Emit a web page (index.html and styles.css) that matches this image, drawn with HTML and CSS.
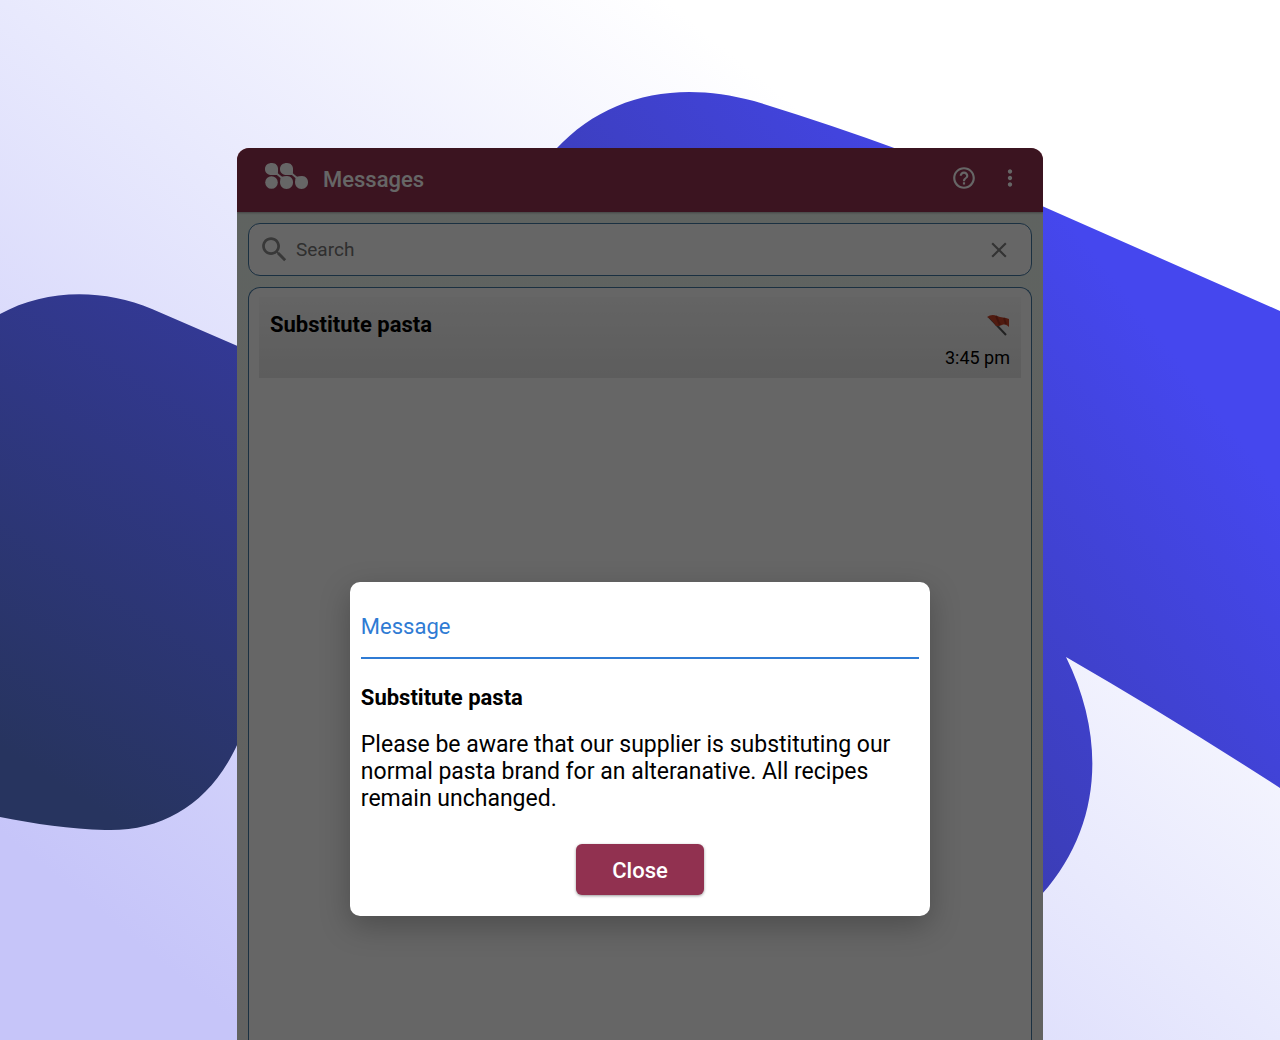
FILE: index.html
```html
<!DOCTYPE html>
<html lang="en">
<head>
    <meta charset="UTF-8">
    <meta name="viewport" content="width=device-width, initial-scale=1.0">
    <title>Messages</title>
    <link rel="stylesheet" href="styles.css">
</head>
<body>
    <svg class="backdrop" viewBox="0 0 1280 1040" preserveAspectRatio="none" aria-hidden="true">
        <defs>
            <linearGradient id="navy" gradientUnits="userSpaceOnUse" x1="20" y1="760" x2="290" y2="330">
                <stop offset="0" stop-color="#27345f"/>
                <stop offset="1" stop-color="#343999"/>
            </linearGradient>
            <linearGradient id="blue" gradientUnits="userSpaceOnUse" x1="800" y1="720" x2="1210" y2="400">
                <stop offset="0" stop-color="#393bab"/>
                <stop offset="1" stop-color="#4547ee"/>
            </linearGradient>
        </defs>
        <path fill="url(#navy)" d="M0 314 C45 289 102 288 152 309 L300 373 L300 560 C268 640 251 715 238 743 C211 803 163 832 105 830 C70 829 35 824 0 817Z"/>
        <path fill="url(#blue)" d="M556 149 C606 95 677 80 754 101 Q832 125 897 149 L1042 206 L1280 311 L1280 788 Q1175 720 1066 657 C1107 740 1101 828 1042 894 L900 900 L540 500Z"/>
    </svg>

    <div class="app">
        <header class="toolbar">
            <svg class="logo" viewBox="0 0 44 28" aria-hidden="true">
                <path d="M0 7C0 3 3 1 7 1c4 0 6 3 6 6v3q0 2-1 3-2 0-5 0C3 13 0 11 0 7z"/>
                <path d="M15 7c0-4 3-6 7-6 4 0 6 3 6 6v3q0 2-1 3-2 0-5 0c-4 0-7-2-7-6z"/>
                <circle cx="6.500" cy="20.500" r="6.300"/>
                <path d="M15 20q0-3 1-5 3-1 6-1c4 0 6 3 6 6.500S25.500 27 21.500 27 15 24 15 20z"/>
                <path d="M30 20q0-3 1-5 3-1 6-1c4 0 6 3 6 6.500S40.500 27 36.500 27 30 24 30 20z"/>
                <path class="logo-link" d="M11 11l6 5M26 11l6 5"/>
            </svg>
            <h1 class="title">Messages</h1>
            <button class="icon-button" type="button" aria-label="Help">
                <svg viewBox="0 0 24 24"><path d="M11 18h2v-2h-2v2zm1-16C6.480 2 2 6.480 2 12s4.480 10 10 10 10-4.480 10-10S17.520 2 12 2zm0 18c-4.410 0-8-3.590-8-8s3.590-8 8-8 8 3.590 8 8-3.590 8-8 8zm0-14c-2.210 0-4 1.790-4 4h2c0-1.100.9-2 2-2s2 .9 2 2c0 2-3 1.750-3 5h2c0-2.250 3-2.500 3-5 0-2.210-1.790-4-4-4z"/></svg>
            </button>
            <button class="icon-button" type="button" aria-label="More">
                <svg viewBox="0 0 24 24"><path d="M12 8c1.100 0 2-.9 2-2s-.9-2-2-2-2 .9-2 2 .9 2 2 2zm0 2c-1.100 0-2 .9-2 2s.9 2 2 2 2-.9 2-2-.9-2-2-2zm0 6c-1.100 0-2 .9-2 2s.9 2 2 2 2-.9 2-2-.9-2-2-2z"/></svg>
            </button>
        </header>

        <main class="content">
            <div class="search-bar">
                <svg class="search-icon" viewBox="0 0 24 24" aria-hidden="true"><path d="M15.500 14h-.79l-.28-.27C15.410 12.590 16 11.110 16 9.500 16 5.910 13.090 3 9.500 3S3 5.910 3 9.500 5.910 16 9.500 16c1.610 0 3.090-.59 4.230-1.570l.27.28v.79l5 4.990L20.490 19l-4.990-5zm-6 0C7.010 14 5 11.990 5 9.500S7.010 5 9.500 5 14 7.010 14 9.500 11.990 14 9.500 14z"/></svg>
                <input class="search-input" type="text" placeholder="Search" aria-label="Search">
                <button class="clear-button" type="button" aria-label="Clear search">
                    <svg viewBox="0 0 24 24"><path d="M19 6.410L17.590 5 12 10.590 6.410 5 5 6.410 10.590 12 5 17.590 6.410 19 12 13.410 17.590 19 19 17.590 13.410 12z"/></svg>
                </button>
            </div>

            <div class="message-list">
                <article class="message-item">
                    <div class="message-row">
                        <h2 class="message-subject">Substitute pasta</h2>
                        <svg class="flag" viewBox="0 0 24 24" aria-hidden="true">
                            <path class="flag-pole" d="M3 4L20 22"/>
                            <path class="flag-cloth" d="M1 4C4 2 7 1 11 3c4 2 8 1 12 3l0 8c-2-2-4-3-7-2-2 1-4 1-6 1C8 10 5 6 1 4z"/>
                            <path class="flag-fold" d="M10 3l4 9M18 5l2 6"/>
                        </svg>
                    </div>
                    <time class="message-time">3:45 pm</time>
                </article>
            </div>
        </main>

        <div class="overlay">
            <div class="dialog" role="dialog" aria-modal="true" aria-labelledby="dialog-title">
                <h2 class="dialog-title" id="dialog-title">Message</h2>
                <h3 class="dialog-subject">Substitute pasta</h3>
                <p class="dialog-text">Please be aware that our supplier is substituting our normal pasta brand for an alteranative. All recipes remain unchanged.</p>
                <button class="close-button" type="button">Close</button>
            </div>
        </div>
    </div>
</body>
</html>
```
FILE: styles.css
```css
:root {
    --color-primary: #953250;
    --color-blue: #2f7bd4;
    --color-border: #4378a3;
    --gap: 11px;
}

* {
    box-sizing: border-box;
}

body {
    margin: 0;
    height: 100vh;
    padding: 148px 16px 0;
    display: flex;
    justify-content: center;
    overflow: hidden;
    font-family: Roboto, Arial, sans-serif;
    color: #000;
    background: linear-gradient(to top right, #c6c5f9 10%, #e8e9fd 50%, #fff 76%);
}

h1, h2, h3, p {
    margin: 0;
}

button {
    border: 0;
    padding: 0;
    background: none;
    font-family: inherit;
    cursor: pointer;
}

.backdrop {
    position: absolute;
    top: 0;
    left: 0;
    width: 100%;
    height: 100%;
    z-index: -1;
}

.app {
    position: relative;
    width: 100%;
    max-width: 806px;
    display: flex;
    flex-direction: column;
    border-radius: 12px 12px 0 0;
    overflow: hidden;
    background: linear-gradient(#edf7f1, #f4f5f2);
}

.toolbar {
    display: flex;
    align-items: center;
    height: 64px;
    padding: 0 20px 4px 28px;
    color: #fff;
    background-color: var(--color-primary);
    box-shadow: 0 1px 2px rgba(0, 0, 0, 0.3);
}

.logo {
    width: 44px;
    height: 28px;
    margin: 0 14px 4px 0;
    fill: #fff;
}

.logo-link {
    stroke: #fff;
    stroke-width: 2;
}

.title {
    flex: 1;
    padding-top: 2px;
    font-size: 22px;
    font-weight: 500;
}

.icon-button {
    width: 26px;
    height: 26px;
    margin-left: 20px;
    fill: #fff;
}

.content {
    flex: 1;
    display: flex;
    flex-direction: column;
    gap: var(--gap);
    padding: var(--gap) var(--gap) 0;
}

.search-bar,
.message-list {
    border: 1px solid var(--color-border);
    border-radius: 12px;
    background-color: #fff;
}

.search-bar {
    display: flex;
    align-items: center;
    height: 53px;
    padding: 0 19px 0 9px;
}

.search-icon {
    width: 33px;
    height: 33px;
    fill: #8c8c8c;
}

.search-input {
    flex: 1;
    min-width: 0;
    border: 0;
    padding: 0 5px;
    outline: 0;
    background: none;
    font: 19px Roboto, Arial, sans-serif;
}

.search-input::placeholder {
    color: #757575;
}

.clear-button {
    width: 26px;
    height: 26px;
    fill: #808080;
}

.message-list {
    flex: 1;
    padding: 9px 10px 0;
    border-bottom: 0;
    border-radius: 12px 12px 0 0;
}

.message-item {
    height: 81px;
    padding: 14px 11px 10px;
    display: flex;
    flex-direction: column;
    justify-content: space-between;
    background: linear-gradient(#fafafa, #e8e8e8);
}

.message-row {
    display: flex;
    justify-content: space-between;
    align-items: center;
}

.message-subject,
.dialog-subject {
    font-size: 22px;
    line-height: 27px;
    font-weight: 700;
}

.message-time {
    align-self: flex-end;
    font-size: 18px;
    line-height: 20px;
}

.flag {
    width: 24px;
    height: 24px;
}

.flag-pole {
    stroke: #555;
    stroke-width: 2;
}

.flag-cloth {
    fill: #c8442a;
}

.flag-fold {
    fill: none;
    stroke: #a33420;
    stroke-width: 2;
}

/* dims the whole app behind the dialog */
.overlay {
    position: absolute;
    top: 0;
    right: 0;
    bottom: 0;
    left: 0;
    display: flex;
    justify-content: center;
    align-items: flex-start;
    padding-top: 434px;
    background-color: rgba(0, 0, 0, 0.6);
}

.dialog {
    width: 72%;
    padding: 21px 11px;
    display: flex;
    flex-direction: column;
    border-radius: 10px;
    background-color: #fff;
    box-shadow: 0 10px 30px rgba(0, 0, 0, 0.25);
}

.dialog-title {
    padding: 10px 0 17px;
    border-bottom: 2px solid var(--color-blue);
    font-size: 22px;
    line-height: 27px;
    font-weight: 400;
    color: var(--color-blue);
}

.dialog-subject {
    margin: 25px 0 20px;
}

.dialog-text {
    font-size: 23px;
    line-height: 27px;
}

.close-button {
    align-self: center;
    width: 128px;
    height: 51px;
    margin-top: 32px;
    padding-top: 2px;
    border-radius: 6px;
    color: #fff;
    background-color: #913150;
    font-size: 22px;
    font-weight: 500;
    box-shadow: 0 1px 3px rgba(0, 0, 0, 0.4);
}
```
